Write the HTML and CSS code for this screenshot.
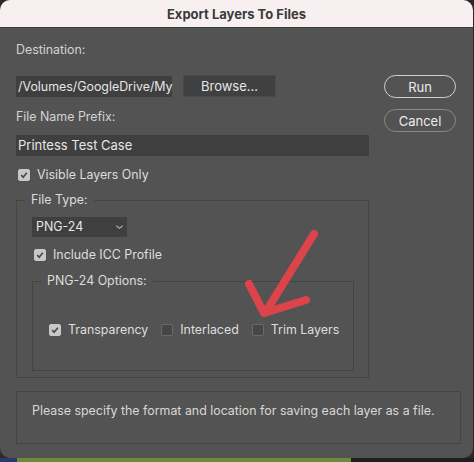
FILE: index.html
```html
<!DOCTYPE html>
<html lang="en">
<head>
    <meta charset="UTF-8">
    <meta name="viewport" content="width=device-width, initial-scale=1.0">
    <title>Export Layers To Files</title>
    <link rel="stylesheet" href="styles.css">
</head>
<body>
    <div class="dialog">
        <div class="titlebar">Export Layers To Files</div>
        <div class="content">
            <div class="main">
                <div class="left">
                    <div class="label">Destination:</div>
                    <div class="dest-row">
                        <div class="field dest">/Volumes/GoogleDrive/My</div>
                        <button class="browse">Browse...</button>
                    </div>
                    <div class="label prefix-label">File Name Prefix:</div>
                    <div class="field prefix">Printess Test Case</div>
                    <label class="check visible">
                        <span class="box checked"><svg viewBox="0 0 12 12"><path d="M2.6 6.2 L5 8.6 L9.4 3.4" /></svg></span>
                        Visible Layers Only
                    </label>

                    <fieldset class="group filetype">
                        <legend>File Type:</legend>
                        <div class="select">
                            PNG-24
                            <svg class="chev" viewBox="0 0 10 6"><path d="M1.5 1.5 L5 4.5 L8.5 1.5" /></svg>
                        </div>
                        <label class="check icc">
                            <span class="box checked"><svg viewBox="0 0 12 12"><path d="M2.6 6.2 L5 8.6 L9.4 3.4" /></svg></span>
                            Include ICC Profile
                        </label>

                        <fieldset class="group options">
                            <legend>PNG-24 Options:</legend>
                            <div class="opt-row">
                                <label class="check">
                                    <span class="box checked"><svg viewBox="0 0 12 12"><path d="M2.6 6.2 L5 8.6 L9.4 3.4" /></svg></span>
                                    Transparency
                                </label>
                                <label class="check">
                                    <span class="box"></span>
                                    Interlaced
                                </label>
                                <label class="check">
                                    <span class="box"></span>
                                    Trim Layers
                                </label>
                            </div>
                        </fieldset>
                    </fieldset>
                </div>
                <div class="actions">
                    <button class="pill run">Run</button>
                    <button class="pill cancel">Cancel</button>
                </div>
            </div>
            <div class="message">Please specify the format and location for saving each layer as a file.</div>
        </div>

        <!-- red hand-drawn annotation over the dialog -->
        <svg class="arrow" width="474" height="458" viewBox="0 0 474 458">
            <path d="M314 234 L265 313 M249 284 L264 313 L306 300" />
        </svg>
    </div>
    <div class="desk">
        <div class="desk-left"></div>
        <div class="desk-green"></div>
        <div class="desk-dark"></div>
    </div>
</body>
</html>
```

FILE: styles.css
```css
body {
    margin: 0;
    background: #2a2a2a;
    font-family: Inter, "Noto Sans", sans-serif;
    font-size: 12.4px;
    line-height: 16px;
    color: #dedede;
}
.dialog {
    position: relative;
    width: 473px;
    height: 458px;
    background: #535353;
    border-radius: 10px;
    overflow: hidden;
}
.titlebar {
    height: 27px;
    line-height: 28px;
    background: #f8f0f0;
    border-bottom: 1px solid #3a3a3a;
    text-align: center;
    font-weight: bold;
    font-size: 13px;
    color: #3a3a3a;
}
.content {
    padding: 14px 17px 0 16px;
}
.main {
    display: flex;
}
.left {
    width: 353px;
}
.label {
    color: #d4d4d4;
}
.dest-row {
    display: flex;
    gap: 11px;
    margin-top: 17px;
}
.field {
    height: 21px;
    line-height: 21px;
    background: #3f3f3f;
    padding-left: 2px;
    white-space: nowrap;
    color: #e6e6e6;
}
.dest {
    width: 154px;
    margin-top: 1px;
}
.browse {
    width: 93px;
    height: 22px;
    background: #404040;
    border: 1px solid #4a4a4a;
    color: #e6e6e6;
    font: inherit;
    font-size: 13px;
    padding: 0;
}
.prefix-label {
    margin-top: 12px;
}
.prefix {
    margin-top: 10px;
    font-size: 13px;
}
.check {
    display: flex;
    align-items: center;
    gap: 7px;
    white-space: nowrap;
}
.visible {
    margin-top: 11px;
    padding-left: 2px;
}
.box {
    width: 10px;
    height: 10px;
    border: 1px solid #6a6a6a;
    background: #464646;
    border-radius: 2px;
    display: flex;
}
.box.checked {
    background: #c8c8c8;
    border-color: #c8c8c8;
}
.box svg {
    width: 10px;
    height: 10px;
    fill: none;
    stroke: #4a4a4a;
    stroke-width: 2;
}
.group {
    margin: 0;
    border: 1px solid #444444;
    min-width: 0;
}
.group legend {
    padding: 0 6px;
    color: #dcdcdc;
}
.filetype {
    margin-top: 9px;
    padding: 9px 0 6px 15px;
    width: 336px;
}
.filetype > legend {
    margin-left: -7px;
}
.select {
    width: 88px;
    height: 20px;
    line-height: 20px;
    background: #3f3f3f;
    padding-left: 4px;
    padding-right: 3px;
    display: flex;
    justify-content: space-between;
    align-items: center;
    color: #e6e6e6;
}
.chev {
    width: 9px;
    height: 6px;
    fill: none;
    stroke: #bdbdbd;
    stroke-width: 1.2;
}
.icc {
    margin-top: 10px;
    padding-left: 2px;
}
.options {
    margin-top: 10px;
    width: 304px;
    padding: 33px 0 32px 16px;
}
.options > legend {
    margin-left: -8px;
}
.opt-row {
    display: flex;
    gap: 13px;
}
.actions {
    margin-left: auto;
    padding-top: 33px;
    display: flex;
    flex-direction: column;
    gap: 11px;
}
.pill {
    width: 72px;
    height: 23px;
    border-radius: 12px;
    background: transparent;
    color: #ececec;
    font: inherit;
    font-size: 13px;
    padding: 0;
}
.run {
    border: 1.5px solid #cfcfcf;
}
.cancel {
    border: 1.5px solid #8a8a8a;
}
.message {
    margin-top: 13px;
    width: 428px;
    height: 40px;
    padding: 11px 0 0 15px;
    border: 1px solid #444444;
    color: #d8d8d8;
}
.arrow {
    position: absolute;
    top: 0;
    left: 0;
    pointer-events: none;
}
.arrow path {
    fill: none;
    stroke: #e8424b;
    stroke-width: 8;
    stroke-linecap: round;
    stroke-linejoin: round;
    opacity: 0.92;
}
.desk {
    display: flex;
    height: 4px;
}
.desk-left {
    width: 17px;
    background: #2a3a6a;
}
.desk-green {
    width: 334px;
    background: #6b8a3c;
}
.desk-dark {
    flex: 1;
    background: #1e1e1e;
}
```
